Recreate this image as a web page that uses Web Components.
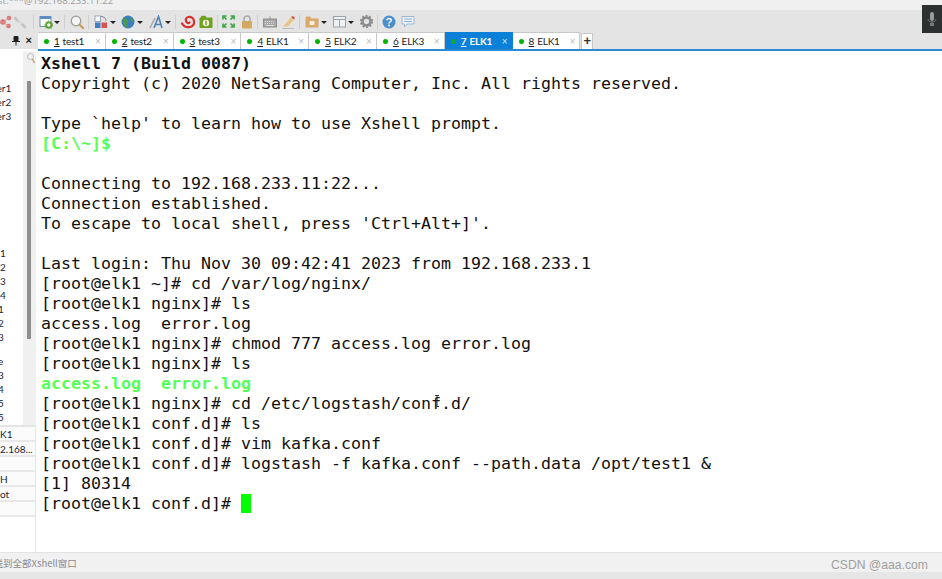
<!DOCTYPE html>
<html>
<head>
<meta charset="utf-8">
<style>
html,body{margin:0;padding:0;height:100%;overflow:hidden;background:#fff}
body{width:942px;height:579px;display:flex;flex-direction:column;font-family:Lato,"Open Sans","Noto Sans CJK SC",sans-serif}
x-main{flex:1;min-height:0}
</style>
</head>
<body>
<x-title>st:***@192.168.233.11:22</x-title>
<x-toolbar></x-toolbar>
<x-tabs>
  <x-tab n="1">test1</x-tab>
  <x-tab n="2">test2</x-tab>
  <x-tab n="3">test3</x-tab>
  <x-tab n="4">ELK1</x-tab>
  <x-tab n="5">ELK2</x-tab>
  <x-tab n="6">ELK3</x-tab>
  <x-tab n="7" on>ELK1</x-tab>
  <x-tab n="8">ELK1</x-tab>
</x-tabs>
<x-main>
  <x-side></x-side>
  <x-term></x-term>
</x-main>
<x-status>送到全部Xshell窗口</x-status>
<x-mic></x-mic>

<script>
const ICONS = {
  cluster:`<circle cx="3" cy="7" r="2.800" fill="#d9534f" opacity=".75"/><circle cx="9" cy="3" r="2.300" fill="#d9534f" opacity=".75"/><circle cx="8.500" cy="11" r="2.300" fill="#d9534f" opacity=".75"/><path d="M3 7 9 3M3 7l5.500 4" stroke="#d99" fill="none"/>`,
  link:`<path d="M2 3l3 3M9 9l3 3" stroke="#c4c4c4" stroke-width="2.600" fill="none" stroke-linecap="round"/><path d="M5 5l4 4" stroke="#d8d8d8" stroke-width="1.400"/>`,
  newwin:`<rect x="1" y="1.500" width="11" height="10" fill="#fff" stroke="#6a8fb8"/><rect x="1" y="1.500" width="11" height="2.500" fill="#5b8ec4"/><circle cx="9.800" cy="10" r="2.600" fill="#fff" stroke="#5aa02c" stroke-width="1.800"/><circle cx="9.800" cy="10" r="3.900" fill="none" stroke="#5aa02c" stroke-width="1" stroke-dasharray="1.400 1.400"/>`,
  search:`<circle cx="6" cy="6" r="4.800" fill="#f4f4f4" stroke="#9b9b9b" stroke-width="1.300"/><path d="M9.500 9.500l4 4" stroke="#c79a5c" stroke-width="2" stroke-linecap="round"/>`,
  transfer:`<rect x="1" y="1" width="5.500" height="5.500" fill="#fff" stroke="#9aa7b5"/><rect x="1" y="7.500" width="5.500" height="5.500" fill="#3f7fc4"/><rect x="7.500" y="7.500" width="5.500" height="5.500" fill="#d9534f"/><path d="M7 1.500c3 0 5 1.500 5 4.500" stroke="#8a8a8a" fill="none"/>`,
  globe:`<circle cx="7" cy="7" r="6.500" fill="#3a7fbf"/><path d="M3 3c2 1 3 0 4 2s-2 3-1 5 2 2 2 3c-2 0-5-2-6-5s0-4 1-5zM9 2c2 1 4 3 4 5l-3-1z" fill="#4f9a4a"/>`,
  font:`<path d="M1 13 6 3" stroke="#a9a9a9" stroke-width="1.500" fill="none"/><path d="M5 13 9.500 1.500 13 13M6.500 9.500h5.500" stroke="#4f7fb5" stroke-width="1.600" fill="none"/>`,
  spiral:`<path d="M1 8.500C3 12 6 12.500 9 12S13.500 9 13 6 10 1.500 7.500 2 4.500 4 5 6s2.500 2.500 3.500 1.500" stroke="#d8302c" stroke-width="2.200" fill="none" stroke-linecap="round"/>`,
  box:`<rect x="0.500" y="2.500" width="13" height="10.500" rx="1" fill="#6fa01f"/><rect x="2" y="0.800" width="5" height="2.500" fill="#6fa01f"/><circle cx="7" cy="8" r="3.200" fill="#f1f5e5"/><path d="M7 5.800v4.400" stroke="#6fa01f" stroke-width="1.400"/>`,
  expand:`<g stroke="#3fa74a" stroke-width="1.700" fill="none"><path d="M1 4.500V1h3.500M1 1l3.500 3.500M12 4.500V1H8.500M12 1 8.500 4.500M1 8.500V12h3.500M1 12l3.500-3.500M12 8.500V12H8.500M12 12 8.500 8.500"/></g>`,
  lock:`<path d="M3 6V4a3 3 0 0 1 6 0v2" stroke="#a9a9a9" stroke-width="1.500" fill="none"/><rect x="1" y="6" width="10" height="7.500" rx="1" fill="#d4a860"/>`,
  keyboard:`<rect x="0.500" y="4" width="13" height="8" fill="#a8a8a8" stroke="#8e8e8e"/><path d="M2 6.500h10M2 8.500h10" stroke="#dcdcdc" stroke-dasharray="1 1"/><path d="M3 10.500h8" stroke="#dcdcdc"/><path d="M7 4V1.500" stroke="#999"/>`,
  pen:`<path d="M1 12l2-3 6-7 3 2.500-6 7z" fill="#e8c78e"/><path d="M9 2l2-1 2 2-1 1.500z" fill="#d8503c"/><path d="M0 13.500h12" stroke="#bbb"/>`,
  folder:`<path d="M0.500 3V12.500H13.500V3.500H6.500L5 1.500H1z" fill="#d9a76a"/><rect x="4.500" y="6" width="5" height="4" fill="#fbeedd"/>`,
  layout:`<rect x="0.500" y="1.500" width="12" height="10.500" fill="#eef1f4" stroke="#98a3ad"/><path d="M6.500 4.500V12M0.500 4.500h12" stroke="#98a3ad"/>`,
  gear:`<circle cx="6.500" cy="6.500" r="4" fill="none" stroke="#8c8c8c" stroke-width="2.600"/><circle cx="6.500" cy="6.500" r="5.700" fill="none" stroke="#8c8c8c" stroke-width="1.800" stroke-dasharray="2 1.600"/>`,
  help:`<circle cx="7" cy="7" r="6.500" fill="#4a8fd0"/><path d="M5 5.300C5 4 6 3.400 7 3.400s2.200.7 2.200 1.900C9.200 6.800 7 6.800 7 8.500" stroke="#fff" stroke-width="1.500" fill="none"/><circle cx="7" cy="10.500" r="1" fill="#fff"/>`,
  chat:`<path d="M1 1.500H13V9H6L3.500 12V9H1z" fill="#eef4f9" stroke="#9db6cc"/><path d="M3 4h8M3 6.500h8" stroke="#86aed0"/>`
};

class XTitle extends HTMLElement{
  constructor(){
    super();
    this.attachShadow({mode:"open"}).innerHTML=`
    <style>
    :host{display:block;height:10px;background:#f0f0f0;overflow:hidden;flex:none}
    span{display:block;margin:-7px 0 0 -2px;font:9.500px/16px "Open Sans",sans-serif;color:#9a9a9a;white-space:nowrap}
    </style>
    <span><slot></slot></span>`;
  }
}

class XToolbar extends HTMLElement{
  constructor(){
    super();
    // each item: kind, left edge in the bar, width; margins come from the gaps
    const items=[
      ["cluster",0,12],["link",13,14],["|",33,1],
      ["newwin",39,14],["v",54,6],["|",64,1],["search",70,14],["|",88,1],
      ["transfer",94,14],["v",110,6],["globe",121,14],["v",137,6],["font",149,14],["v",165,6],["|",175,1],
      ["spiral",181,14],["box",199,14],["|",217,1],["expand",222,13],["lock",241,12],["|",257,1],
      ["keyboard",263,14],["pen",282,13],["|",299,1],
      ["folder",305,14],["v",321,6],["layout",333,13],["v",348,6],["gear",360,13],["|",377,1],["help",382,14],["chat",401,14]
    ];
    let end=0;
    const html=items.map(([k,x,w])=>{
      const m=x-end; end=x+w;
      if(k==="|") return `<i class="sep" style="margin-left:${m}px"></i>`;
      if(k==="v") return `<i class="caret" style="margin-left:${m}px"></i>`;
      return `<svg style="margin-left:${m}px" width="${w}" height="14" viewBox="0 0 ${w} 14">${ICONS[k]}</svg>`;
    }).join("");
    this.attachShadow({mode:"open"}).innerHTML=`
    <style>
    :host{display:flex;align-items:center;height:22px;padding-top:2px;box-sizing:border-box;background:#e4e4e4;flex:none}
    svg{flex:none;display:block}
    .sep{width:1px;height:14px;background:#cfcfcf;flex:none}
    .caret{width:0;height:0;border:3px solid transparent;border-top:3px solid #222;border-bottom:0;flex:none}
    </style>${html}`;
  }
}

class XMain extends HTMLElement{
  constructor(){
    super();
    this.attachShadow({mode:"open"}).innerHTML=`
    <style>
    :host{display:grid;grid-template-columns:38px 1fr;grid-template-rows:1fr;background:#fff}
    </style><slot></slot>`;
  }
}

class XTab extends HTMLElement{
  constructor(){
    super();
    const n=this.getAttribute("n"),on=this.hasAttribute("on");
    this.attachShadow({mode:"open"}).innerHTML=`
    <style>
    :host{display:flex;align-items:center;width:67.800px;height:17px;box-sizing:border-box;background:${on?"#0a80d8":"#fff"};border:1px solid #c8c8c8;border-bottom:0;border-left:0;${on?"border-color:#0a80d8;":""}flex:none;font:${on?700:400} 10px Lato,sans-serif;letter-spacing:-.2px;color:${on?"#fff":"#222"}}
    .dot{width:5px;height:5px;border-radius:50%;background:${on?"#10a838":"#00b400"};margin:0 5px 0 6px;flex:none}
    u{margin-right:3px;text-underline-offset:1px}
    .t{flex:1;white-space:nowrap}
    .x{width:14px;font:10px "Liberation Sans",sans-serif;color:${on?"#cfe6f7":"#bbb"};text-align:center;letter-spacing:0}
    </style>
    <span class="dot"></span><span class="t"><u>${n}</u><slot></slot></span><span class="x">×</span>`;
  }
}

class XTabs extends HTMLElement{
  constructor(){
    super();
    this.attachShadow({mode:"open"}).innerHTML=`
    <style>
    :host{display:grid;grid-template-columns:38px 1fr;height:19px;flex:none;background:#e4e4e4}
    .head{height:17px;display:flex;align-items:center;justify-content:flex-end;gap:6px;padding-right:6px;box-sizing:border-box}
    .head span{font:bold 11px/11px "Liberation Sans",sans-serif;color:#222}
    .gap{display:block;height:2px;background:#fff}
    .strip{display:flex;align-items:flex-end;height:19px;box-sizing:border-box;border-bottom:2px solid #2a8bd2}
    .plus{width:12px;height:16px;box-sizing:border-box;margin-left:1px;background:#fff;border:1px solid #c8c8c8;border-bottom:0;font:bold 13px/14px "Liberation Sans",sans-serif;color:#333;text-align:center;flex:none}
    </style>
    <div><div class="head"><svg width="8" height="10" viewBox="0 0 8 10"><path d="M2 .5h4v5H2zM0 5.500h8M4 5.500v4" fill="#222" stroke="#222"/></svg><span>×</span></div><i class="gap"></i></div>
    <div class="strip"><slot></slot><span class="plus">+</span></div>`;
  }
}

class XSide extends HTMLElement{
  constructor(){
    super();
    const rows=(list,m)=>list.map(t=>`<div class="r" style="margin-left:${m}px">${t}</div>`).join("");
    this.attachShadow({mode:"open"}).innerHTML=`
    <style>
    :host{display:block;min-height:0;position:relative;background:#fff;overflow:hidden;font:10px Lato,sans-serif;color:#223}
    .body{display:grid;grid-template-columns:23px 15px;height:100%}
    .tree{background:#fff;overflow:hidden;display:flex;flex-direction:column}
    .track{background:#f0f0f0;border-right:2px solid #fff;position:relative}
    .thumb{position:absolute;left:4px;width:4px;top:30px;height:258px;background:#8e8e8e}
    .top{height:30px;flex:none}
    .r{white-space:nowrap;height:14px;line-height:14px;flex:none}
    .sp1{height:123px;flex:none}
    .sp2{height:10px;flex:none}
    .glass{position:absolute;left:27px;top:2px}
    .low{position:absolute;left:0;top:374px;bottom:0;width:35px;background:#fff;border-right:1px solid #e6e6e6;border-top:2px solid #e4e4e4}
    .low .r{border-bottom:2px solid #e8e8e8;box-sizing:border-box;height:15px;line-height:15px;background:#fbfbfb}
    </style>
    <div class="body">
      <div class="tree">
        <div class="top"></div>
        ${rows(["er1","er2","er3"],-3.5)}
        <div class="sp1"></div>
        ${rows(["1","2","3","4"],0)}
        ${rows(["1","2","3"],-2)}
        <div class="sp2"></div>
        ${rows(["e","3","4","5","5"],-2)}
      </div>
      <div class="track"><div class="thumb"></div></div>
    </div>
    <svg class="glass" width="8" height="11" viewBox="0 0 8 11"><circle cx="3.500" cy="3.500" r="3" fill="none" stroke="#bbb"/><path d="M5.500 6l2 4" stroke="#c9a06a" stroke-width="1.500"/></svg>
    <div class="low">
      <div class="r">K1</div>
      <div class="r">2.168...</div>
      <div class="r">&nbsp;</div>
      <div class="r">H</div>
      <div class="r">ot</div>
      <div class="r">&nbsp;</div>
    </div>`;
  }
}

class XTerm extends HTMLElement{
  constructor(){
    super();
    this.attachShadow({mode:"open"}).innerHTML=`
    <style>
    :host{display:block;position:relative;background:#fff;overflow:hidden}
    pre{margin:0;padding:3px 0 0 3px;font:16.620px/20px "DejaVu Sans Mono",monospace;color:#111}
    b{font-weight:bold}
    .g{color:#55ff55;font-weight:bold}
    .c{display:inline-block;width:10px;height:19px;background:#00ff00;vertical-align:-4px}
    svg{position:absolute;left:396px;top:344px}
    </style>
<pre><b>Xshell 7 (Build 0087)</b>
Copyright (c) 2020 NetSarang Computer, Inc. All rights reserved.

Type \`help' to learn how to use Xshell prompt.
<span class="g">[C:\\~]$</span>

Connecting to 192.168.233.11:22...
Connection established.
To escape to local shell, press 'Ctrl+Alt+]'.

Last login: Thu Nov 30 09:42:41 2023 from 192.168.233.1
[root@elk1 ~]# cd /var/log/nginx/
[root@elk1 nginx]# ls
access.log  error.log
[root@elk1 nginx]# chmod 777 access.log error.log
[root@elk1 nginx]# ls
<span class="g">access.log  error.log</span>
[root@elk1 nginx]# cd /etc/logstash/conf.d/
[root@elk1 conf.d]# ls
[root@elk1 conf.d]# vim kafka.conf
[root@elk1 conf.d]# logstash -f kafka.conf --path.data /opt/test1 &amp;
[1] 80314
[root@elk1 conf.d]# <span class="c"></span></pre>
    <svg width="6" height="12" viewBox="0 0 6 12"><path d="M1 .5h4M3 .5v11M1 11.500h4" stroke="#333" fill="none"/></svg>`;
  }
}

class XStatus extends HTMLElement{
  constructor(){
    super();
    this.attachShadow({mode:"open"}).innerHTML=`
    <style>
    :host{display:block;flex:none;height:27px;background:#e6e6e6;overflow:hidden}
    .bar{height:20px;box-sizing:border-box;border-top:1px solid #e4e4e4;background:#f1f1f1;display:flex;justify-content:space-between;align-items:center;padding-right:14px;color:#8a8a8a}
    .l{margin-left:-6.500px;white-space:nowrap;font:9.500px "Noto Sans CJK SC",sans-serif}
    .w{font:12.200px "Liberation Sans",sans-serif;color:#a0a0a0;margin-top:4px}
    </style>
    <div class="bar"><span class="l"><slot></slot></span><span class="w">CSDN @aaa.com</span></div>`;
  }
}

class XMic extends HTMLElement{
  constructor(){
    super();
    this.attachShadow({mode:"open"}).innerHTML=`
    <style>
    :host{position:absolute;left:922px;top:5px;width:20px;height:28px;background:#2d3030;display:flex;align-items:center;justify-content:center}
    </style>
    <svg width="10" height="14" viewBox="0 0 10 14"><rect x="3" y="0" width="4" height="9" rx="2" fill="#9a9a9a"/><path d="M1 7c0 2 2 3 4 3s4-1 4-3M5 10v3" stroke="#777" fill="none"/><rect x="3" y="11" width="4" height="3" fill="#777"/></svg>`;
  }
}

customElements.define("x-title",XTitle);
customElements.define("x-toolbar",XToolbar);
customElements.define("x-main",XMain);
customElements.define("x-tab",XTab);
customElements.define("x-tabs",XTabs);
customElements.define("x-side",XSide);
customElements.define("x-term",XTerm);
customElements.define("x-status",XStatus);
customElements.define("x-mic",XMic);
</script>
</body>
</html>
